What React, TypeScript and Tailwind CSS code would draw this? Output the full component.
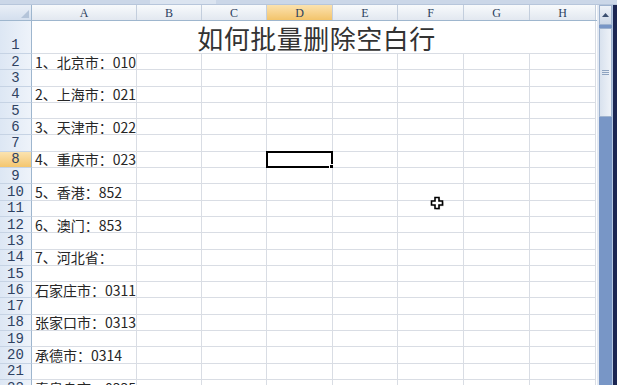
import React from "react";

const colNames = ["A", "B", "C", "D", "E", "F", "G", "H"];
const colW = ["w-[105px]", "w-[65px]", "w-[65px]", "w-[66px]", "w-[65px]", "w-[66px]", "w-[66px]", "w-[66px]"];

// text in column A, by row number
const cellText: Record<number, string> = {
  2: "1、北京市：010",
  4: "2、上海市：021",
  6: "3、天津市：022",
  8: "4、重庆市：023",
  10: "5、香港：852",
  12: "6、澳门：853",
  14: "7、河北省：",
  16: "石家庄市：0311",
  18: "张家口市：0313",
  20: "承德市：0314",
  22: "秦皇岛市：0335",
};

const rows = Array.from({ length: 22 }, (_, i) => i + 1);

function RowHead({ n, tall }: { n: number; tall?: boolean }) {
  const active = n === 8;
  return (
    <div
      className={`w-[32px] shrink-0 flex border-b border-r border-b-[#c6d3e4] border-r-[#9eb6ce] ${
        active ? "bg-gradient-to-b from-[#fbe3b0] to-[#f4c66e]" : "bg-gradient-to-r from-[#dde7f4] to-[#eef3fa]"
      } ${tall ? "items-end pb-[1px]" : "items-center"}`}
    >
      <span className="w-full text-center font-['Liberation_Mono',monospace] text-[14px] leading-[14px] text-[#2f4262]">
        {n}
      </span>
    </div>
  );
}

function ColHeader() {
  return (
    <div className="flex h-[16px] shrink-0 border-b border-[#9eb6ce]">
      <div className="relative w-[32px] shrink-0 border-r border-[#9eb6ce] bg-gradient-to-b from-[#e9eff7] to-[#d4dfee]">
        <div className="absolute right-[2px] bottom-[2px] w-0 h-0 border-l-[8px] border-l-transparent border-b-[8px] border-b-[#b4c4d9]" />
      </div>
      {colNames.map((c, i) => (
        <div
          key={c}
          className={`${colW[i]} shrink-0 flex items-center justify-center border-r border-[#c3cedd] font-['Liberation_Serif',serif] text-[12px] leading-none text-[#2c3f5e] ${
            c === "D" ? "bg-gradient-to-b from-[#fbe2ae] to-[#f3c46a]" : "bg-gradient-to-b from-[#f8fafc] to-[#e2e8f0]"
          }`}
        >
          {c}
        </div>
      ))}
    </div>
  );
}

function Scrollbar() {
  return (
    <div className="w-[20px] shrink-0 flex">
      <div className="w-[2px] bg-[#e4eaf3]" />
      <div className="flex-1 flex flex-col bg-[#7896c6]">
        <div className="h-[20px] flex items-center justify-center bg-gradient-to-b from-[#eef2f8] to-[#cdd8e7] border border-[#9fb3cf]">
          <svg width="7" height="4" viewBox="0 0 7 4">
            <path d="M0 4 L3.5 0 L7 4 Z" fill="#3b4f70" />
          </svg>
        </div>
        <div className="mt-[3px] h-[89px] flex flex-col items-center justify-center gap-[1px] bg-gradient-to-r from-[#d9e2ee] to-[#eef2f8] border border-[#9fb3cf]">
          <div className="w-[7px] h-[1px] bg-[#8ea3c0]" />
          <div className="w-[7px] h-[1px] bg-[#8ea3c0]" />
          <div className="w-[7px] h-[1px] bg-[#8ea3c0]" />
        </div>
      </div>
      <div className="w-[1px] bg-[#b3c6e1]" />
      <div className="w-[4px] bg-[#1b2652]" />
    </div>
  );
}

export default function App() {
  return (
    <div className="relative w-[617px] h-[385px] overflow-hidden flex flex-col bg-white">
      <div className="h-[5px] shrink-0 flex bg-[#cbd7e8] border-b border-[#b7c6db]">
        <div className="ml-[150px] w-[66px] bg-[#dbe4f0]" />
      </div>

      <div className="flex flex-1 min-h-0">
        <div className="w-[597px] shrink-0 flex flex-col bg-white">
          <ColHeader />

          {rows.map((n) =>
            n === 1 ? (
              <div key={n} className="flex h-[33px] shrink-0">
                <RowHead n={n} tall />
                <div className="w-[564px] shrink-0 flex items-end justify-center border-b border-r border-[#d9dde4] pl-[6px]">
                  <span className="font-['Noto_Sans_CJK_SC',sans-serif] text-[26px] leading-[31px] tracking-[0.5px] text-[#333333]">
                    如何批量删除空白行
                  </span>
                </div>
              </div>
            ) : (
              <div key={n} className="flex h-[16.3px] shrink-0">
                <RowHead n={n} />
                {colNames.map((c, i) => (
                  <div
                    key={c}
                    className={`${colW[i]} relative shrink-0 flex items-center border-b border-r border-[#d9dde4]`}
                  >
                    {i === 0 && cellText[n] && (
                      <span className="pl-[3px] whitespace-nowrap font-['Noto_Sans_CJK_SC',sans-serif] text-[14px] leading-[16px] text-[#262626]">
                        {cellText[n]}
                      </span>
                    )}
                    {c === "D" && n === 8 && (
                      <div className="absolute -left-[1px] -top-[1px] -right-[1px] -bottom-[1px] border-2 border-black">
                        <div className="absolute -right-[3px] -bottom-[3px] w-[5px] h-[5px] bg-black border border-white" />
                      </div>
                    )}
                  </div>
                ))}
              </div>
            )
          )}
        </div>
        <Scrollbar />
      </div>

      {/* mouse cursor */}
      <svg className="absolute left-[430px] top-[196px]" width="15" height="15" viewBox="0 0 15 15">
        <path
          d="M5 1.5 H9 V5 H12.5 V9 H9 V12.5 H5 V9 H1.5 V5 H5 Z"
          fill="#9a9a9a"
          opacity="0.5"
          transform="translate(1.2 1.2)"
        />
        <path d="M5 1.5 H9 V5 H12.5 V9 H9 V12.5 H5 V9 H1.5 V5 H5 Z" fill="#ffffff" stroke="#000000" strokeWidth="1.6" />
      </svg>
    </div>
  );
}
